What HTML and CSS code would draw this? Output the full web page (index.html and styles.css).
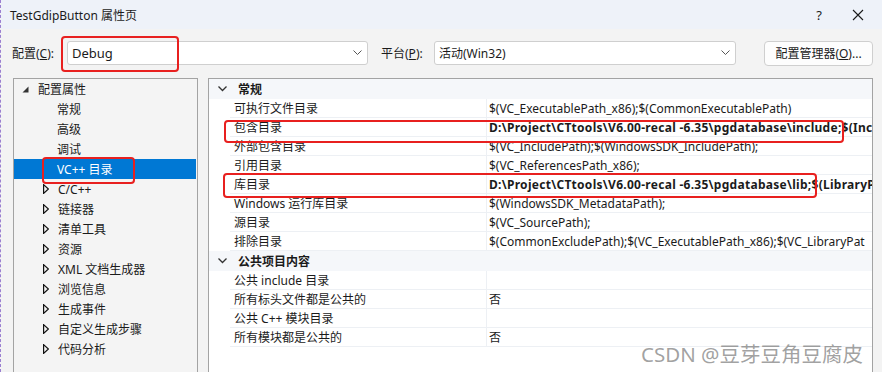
FILE: index.html
```html
<!DOCTYPE html>
<html>
<head>
<meta charset="utf-8">
<title>TestGdipButton 属性页</title>
<link rel="stylesheet" href="styles.css">
</head>
<body>
<div class="window">

  <!-- title bar -->
  <div class="titlebar">
    <span class="title">TestGdipButton 属性页</span>
    <span class="help">?</span>
    <svg class="close" width="12" height="12" viewBox="0 0 12 12"><path d="M1 1 L11 11 M11 1 L1 11" stroke="#1a1a1a" stroke-width="1.1" fill="none"/></svg>
  </div>

  <!-- configuration row -->
  <div class="toolbar">
    <span class="label">配置(<u>C</u>):</span>
    <div class="combo combo-config">
      <span class="combo-text big">Debug</span>
      <svg class="chev" width="9" height="6" viewBox="0 0 9 6"><path d="M0.5 0.5 L4.5 4.5 L8.5 0.5" stroke="#555" fill="none"/></svg>
    </div>
    <span class="label label-platform">平台(<u>P</u>):</span>
    <div class="combo combo-platform">
      <span class="combo-text">活动(Win32)</span>
      <svg class="chev" width="9" height="6" viewBox="0 0 9 6"><path d="M0.5 0.5 L4.5 4.5 L8.5 0.5" stroke="#555" fill="none"/></svg>
    </div>
    <button class="btn">配置管理器(<u>O</u>)...</button>
  </div>

  <div class="main">

    <!-- tree -->
    <div class="tree">
      <div class="node">
        <svg class="tri" width="7" height="7" viewBox="0 0 7 7"><path d="M6.5 0.5 L6.5 6.5 L0.5 6.5 Z" fill="#333"/></svg>
        <span>配置属性</span>
      </div>
      <div class="node child">常规</div>
      <div class="node child">高级</div>
      <div class="node child">调试</div>
      <div class="node child selected">VC++ 目录</div>
      <div class="node sub"><svg class="arrow" width="6" height="10" viewBox="0 0 6 10"><path d="M0.6 0.6 L5.4 5 L0.6 9.4 Z" stroke="#111" stroke-width="1.2" fill="none"/></svg><span>C/C++</span></div>
      <div class="node sub"><svg class="arrow" width="6" height="10" viewBox="0 0 6 10"><path d="M0.6 0.6 L5.4 5 L0.6 9.4 Z" stroke="#111" stroke-width="1.2" fill="none"/></svg><span>链接器</span></div>
      <div class="node sub"><svg class="arrow" width="6" height="10" viewBox="0 0 6 10"><path d="M0.6 0.6 L5.4 5 L0.6 9.4 Z" stroke="#111" stroke-width="1.2" fill="none"/></svg><span>清单工具</span></div>
      <div class="node sub"><svg class="arrow" width="6" height="10" viewBox="0 0 6 10"><path d="M0.6 0.6 L5.4 5 L0.6 9.4 Z" stroke="#111" stroke-width="1.2" fill="none"/></svg><span>资源</span></div>
      <div class="node sub"><svg class="arrow" width="6" height="10" viewBox="0 0 6 10"><path d="M0.6 0.6 L5.4 5 L0.6 9.4 Z" stroke="#111" stroke-width="1.2" fill="none"/></svg><span>XML 文档生成器</span></div>
      <div class="node sub"><svg class="arrow" width="6" height="10" viewBox="0 0 6 10"><path d="M0.6 0.6 L5.4 5 L0.6 9.4 Z" stroke="#111" stroke-width="1.2" fill="none"/></svg><span>浏览信息</span></div>
      <div class="node sub"><svg class="arrow" width="6" height="10" viewBox="0 0 6 10"><path d="M0.6 0.6 L5.4 5 L0.6 9.4 Z" stroke="#111" stroke-width="1.2" fill="none"/></svg><span>生成事件</span></div>
      <div class="node sub"><svg class="arrow" width="6" height="10" viewBox="0 0 6 10"><path d="M0.6 0.6 L5.4 5 L0.6 9.4 Z" stroke="#111" stroke-width="1.2" fill="none"/></svg><span>自定义生成步骤</span></div>
      <div class="node sub"><svg class="arrow" width="6" height="10" viewBox="0 0 6 10"><path d="M0.6 0.6 L5.4 5 L0.6 9.4 Z" stroke="#111" stroke-width="1.2" fill="none"/></svg><span>代码分析</span></div>
    </div>

    <!-- property grid -->
    <div class="grid">
      <div class="cat">
        <svg class="cat-chev" width="9" height="6" viewBox="0 0 9 6"><path d="M0.5 0.5 L4.5 4.5 L8.5 0.5" stroke="#333" stroke-width="1.3" fill="none"/></svg>
        <span>常规</span>
      </div>
      <div class="row"><span class="name">可执行文件目录</span><span class="value">$(VC_ExecutablePath_x86);$(CommonExecutablePath)</span></div>
      <div class="row"><span class="name">包含目录</span><span class="value strong">D:\Project\CTtools\V6.00-recal -6.35\pgdatabase\include;$(Inc</span></div>
      <div class="row"><span class="name">外部包含目录</span><span class="value">$(VC_IncludePath);$(WindowsSDK_IncludePath);</span></div>
      <div class="row"><span class="name">引用目录</span><span class="value">$(VC_ReferencesPath_x86);</span></div>
      <div class="row"><span class="name">库目录</span><span class="value strong">D:\Project\CTtools\V6.00-recal -6.35\pgdatabase\lib;$(LibraryP</span></div>
      <div class="row"><span class="name">Windows 运行库目录</span><span class="value">$(WindowsSDK_MetadataPath);</span></div>
      <div class="row"><span class="name">源目录</span><span class="value">$(VC_SourcePath);</span></div>
      <div class="row"><span class="name">排除目录</span><span class="value">$(CommonExcludePath);$(VC_ExecutablePath_x86);$(VC_LibraryPat</span></div>
      <div class="cat">
        <svg class="cat-chev" width="9" height="6" viewBox="0 0 9 6"><path d="M0.5 0.5 L4.5 4.5 L8.5 0.5" stroke="#333" stroke-width="1.3" fill="none"/></svg>
        <span>公共项目内容</span>
      </div>
      <div class="row"><span class="name">公共 include 目录</span><span class="value"></span></div>
      <div class="row"><span class="name">所有标头文件都是公共的</span><span class="value">否</span></div>
      <div class="row"><span class="name">公共 C++ 模块目录</span><span class="value"></span></div>
      <div class="row"><span class="name">所有模块都是公共的</span><span class="value">否</span></div>
    </div>
  </div>

  <!-- red annotation boxes drawn over the screenshot -->
  <div class="mark mark-debug"></div>
  <div class="mark mark-vc"></div>
  <div class="mark mark-include"></div>
  <div class="mark mark-lib"></div>

  <div class="watermark">CSDN @豆芽豆角豆腐皮</div>
</div>
</body>
</html>
```

FILE: styles.css
```css
/** whole window **/
body {
  margin: 0;
  font-family: "Noto Sans", "Noto Sans CJK SC", sans-serif;
  font-size: 12px;
  color: #1b1b1b;
}

.window {
  position: relative;
  width: 882px;
  height: 372px;
  overflow: hidden;
  background-color: #f3f3f3;
  border-left: 1px dashed #9a7fd0;
  box-sizing: border-box;
}

/** title bar **/
.titlebar {
  height: 29px;
  background-color: #eef2f9;
  display: flex;
  align-items: center;
  padding-left: 9px;
}

.title {
  flex: 1;
  font-size: 12px;
}

.help {
  font-size: 13px;
  margin-right: 30px;
}

.close {
  margin-right: 18px;
}

/** configuration row **/
.toolbar {
  display: flex;
  align-items: center;
  height: 24px;
  padding: 12px 0 12px 11px;
}

.label {
  width: 55px;
}

.label-platform {
  width: 53px;
  margin-left: 13px;
}

.combo {
  height: 24px;
  box-sizing: border-box;
  background-color: #ffffff;
  border: 1px solid #cfcfcf;
  border-radius: 3px;
  display: flex;
  align-items: center;
  justify-content: space-between;
  padding: 0 5px 0 4px;
}

.combo-config {
  width: 301px;
}

.combo-platform {
  width: 302px;
}

.combo-text.big {
  font-size: 13px;
}

.btn {
  margin-left: 28px;
  width: 109px;
  height: 25px;
  background-color: #fdfdfd;
  border: 1px solid #cfcfcf;
  border-radius: 4px;
  font-family: inherit;
  font-size: 12px;
  color: #1b1b1b;
  padding: 0;
}

/** tree and property grid **/
.main {
  display: flex;
  gap: 10px;
  padding-left: 12px;
  margin-top: 1px;
}

.tree {
  width: 185px;
  height: 300px;
  box-sizing: border-box;
  border: 1px solid #a3a3a3;
  background-color: #f4f4f4;
}

.node {
  height: 20px;
  display: flex;
  align-items: center;
  padding-left: 8px;
}

.node .tri {
  margin-right: 9px;
}

.child {
  padding-left: 43px;
}

.sub {
  padding-left: 29px;
}

.sub .arrow {
  margin-right: 9px;
}

.selected {
  background-color: #0078d4;
  color: #ffffff;
  margin-right: 1px;
}

.grid {
  width: 665px;
  height: 300px;
  box-sizing: border-box;
  border: 1px solid #a3a3a3;
  background-color: #ffffff;
}

.cat {
  height: 20px;
  display: flex;
  align-items: center;
  background-color: #f5f7fa;
  font-weight: bold;
  padding-left: 9px;
}

.cat-chev {
  margin-right: 11px;
}

.row {
  height: 19px;
  box-sizing: border-box;
  display: grid;
  grid-template-columns: 256px 1fr;
  margin-left: 21px;
  border-bottom: 1px solid #edf0f4;
  background-color: #ffffff;
}

.name,
.value {
  display: flex;
  align-items: center;
  padding-left: 4px;
  white-space: nowrap;
  overflow: hidden;
}

.value {
  border-left: 1px solid #edf0f4;
  padding-left: 2px;
}

.strong {
  font-weight: bold;
  letter-spacing: 0.28px;
}

/** red annotation boxes **/
.mark {
  position: absolute;
  border: 2px solid #e8201f;
  border-radius: 4px;
}

.mark-debug {
  left: 60px;
  top: 36px;
  width: 114px;
  height: 32px;
}

.mark-vc {
  left: 41px;
  top: 157px;
  width: 89px;
  height: 23px;
}

.mark-include {
  left: 223px;
  top: 120px;
  width: 616px;
  height: 19px;
}

.mark-lib {
  left: 222px;
  top: 173px;
  width: 590px;
  height: 21px;
}

.watermark {
  position: absolute;
  left: 640px;
  top: 338px;
  font-size: 20.5px;
  color: rgba(120, 120, 120, 0.7);
}
```
